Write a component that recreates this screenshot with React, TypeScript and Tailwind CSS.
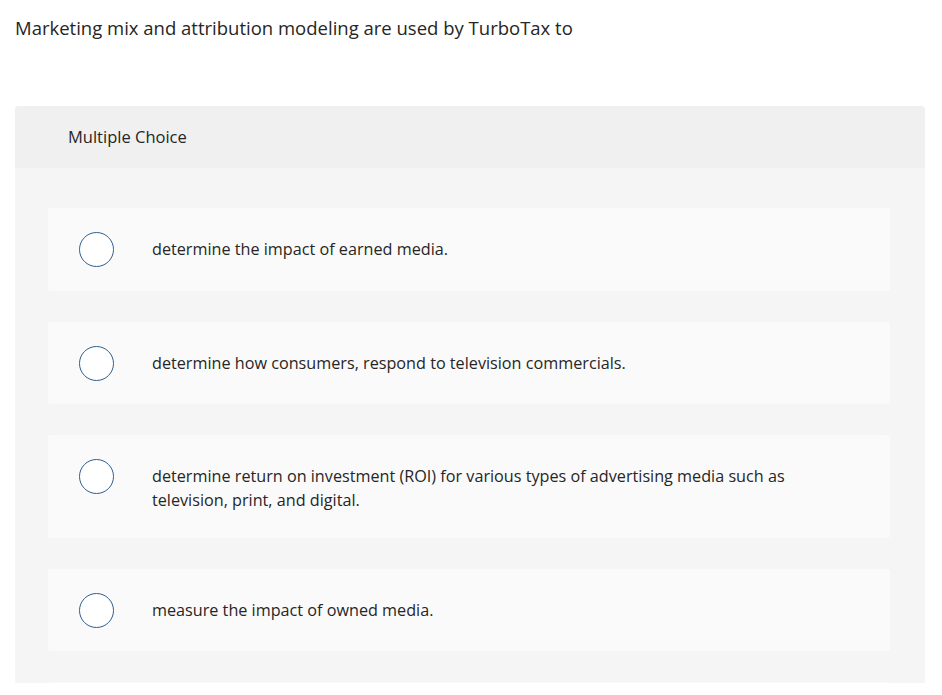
import React from "react";

const options = [
  "determine the impact of earned media.",
  "determine how consumers, respond to television commercials.",
  "determine return on investment (ROI) for various types of advertising media such as television, print, and digital.",
  "measure the impact of owned media.",
];

export default function App() {
  return (
    <div className="w-[942px] h-[695px] bg-white overflow-hidden text-[#262626]" style={{ fontFamily: "'Open Sans', 'Liberation Sans', sans-serif" }}>
      <div className="px-[15px] pt-[16px]">
        <p className="text-[18.5px] leading-[24px]">Marketing mix and attribution modeling are used by TurboTax to</p>
      </div>
      <div className="mx-[15px] mt-[66px] w-[910px] h-[577px] rounded-t-[4px] overflow-hidden bg-[#f5f5f5]">
        <div className="h-[62px] bg-[#f0f0f0] flex items-center pl-[53px]">
          <span className="text-[16.5px] leading-[20px]">Multiple Choice</span>
        </div>
        <div className="pl-[33px] pr-[35px] pt-[40px] flex flex-col gap-[31px]">
          {options.map((o, i) => (
            <div key={i} className="bg-[#fafafa] rounded-[3px] flex items-start pt-[24px] pb-[23.5px] pl-[31px] pr-[70px]">
              <div className="w-[35px] h-[35px] shrink-0 rounded-full border-[1.5px] border-[#2f5f8f] bg-white" />
              <div className="ml-[38px] pt-[5px] pb-[2px] text-[16.2px] leading-[24px]">{o}</div>
            </div>
          ))}
          <div className="bg-[#fafafa] rounded-[3px] h-[82px]" />
        </div>
      </div>
    </div>
  );
}
